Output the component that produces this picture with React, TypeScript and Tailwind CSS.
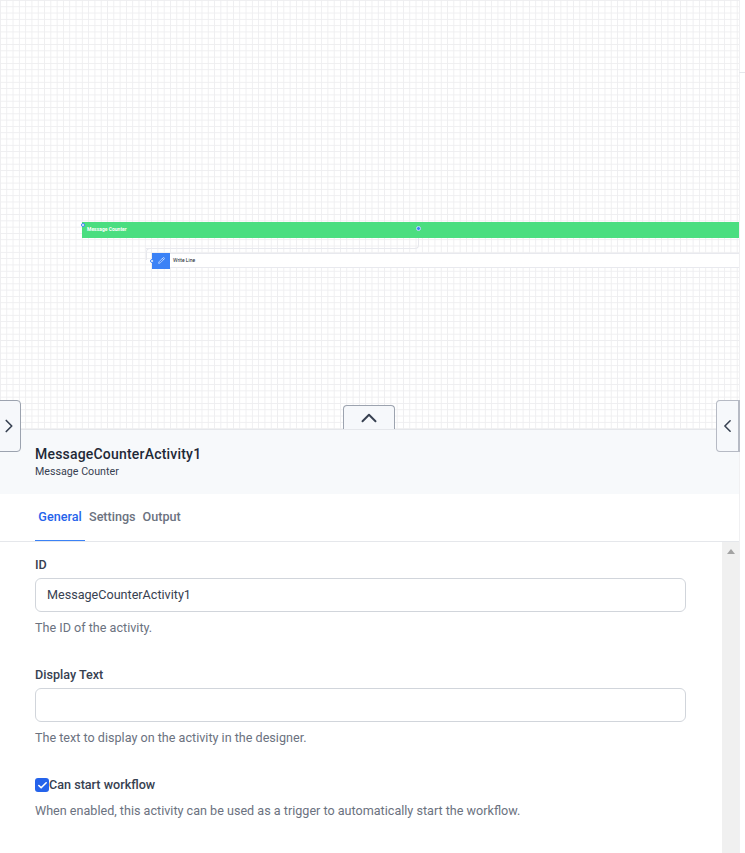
import { ChevronLeft, ChevronRight, ChevronUp, Pencil, Check } from "lucide-react";

function Field({ label, value, help }: { label: string; value: string; help: string }) {
  return (
    <div className="mb-[27px]">
      <div className="text-[12.6px] leading-[20px] font-medium text-[#374151]">{label}</div>
      <div className="mt-[3px] h-[34px] w-[651px] rounded-[6px] border border-[#d1d5db] bg-white px-[11px] text-[12.6px] leading-[32px] text-[#374151]">
        {value}
      </div>
      <p className="mt-[6px] text-[12.6px] leading-[20px] text-[#6b7280]">{help}</p>
    </div>
  );
}

export default function App() {
  return (
    <div className="relative h-[853px] w-[745px] overflow-hidden bg-white font-['Roboto',sans-serif]">
      {/* designer canvas */}
      <div className="relative h-[430px] w-[739px] overflow-hidden border-b border-[#e5e7eb] bg-white bg-[linear-gradient(#eeeef0_1px,transparent_1px),linear-gradient(90deg,#eeeef0_1px,transparent_1px)] bg-[size:6.3px_6.3px]">
        <div className="absolute left-[82px] top-[222px] flex h-[16px] w-[657px] items-center bg-[#4ade80] pl-[5px] text-[5px] font-bold text-white">
          Message Counter
        </div>
        <div className="absolute left-[81px] top-[223px] h-[4px] w-[4px] rounded-full border border-[#3b82f6] bg-white" />
        <div className="absolute left-[416px] top-[226px] h-[5px] w-[5px] rounded-full border border-[#bfdbfe] bg-[#3b82f6]" />

        <div className="absolute left-[146px] top-[238px] h-[11px] w-[273px] rounded-br-[4px] border-b border-r border-[#e8e9ee]" />
        <div className="absolute left-[146px] top-[248px] h-[12px] w-[6px] rounded-tl-[4px] border-l border-t border-[#e8e9ee]" />

        <div className="absolute left-[152px] top-[253px] flex h-[15px] w-[587px] items-center border-y border-[#e8e9ee] bg-white">
          <div className="flex h-[16px] w-[18px] items-center justify-center bg-[#3b82f6]">
            <Pencil size={7} color="#ffffff" strokeWidth={2} />
          </div>
          <span className="ml-[3px] mt-[1px] text-[5px] font-normal text-[#111827]">Write Line</span>
        </div>
        <div className="absolute left-[150px] top-[259px] h-[4px] w-[4px] rounded-full border border-[#3b82f6] bg-white" />
      </div>

      {/* right gutter edge */}
      <div className="absolute left-[739px] top-0 h-[853px] w-[1px] bg-[#f0f0f2]" />
      <div className="absolute left-[739px] top-[72px] h-[1px] w-[6px] bg-[#e5e7eb]" />

      {/* side and collapse toggles */}
      <button className="absolute left-[-5px] top-[400px] flex h-[52px] w-[26px] items-center justify-center rounded-[4px] border border-[#9ca3af] bg-[#f6f8fb] pl-[2px] text-[#374151]">
        <ChevronRight size={26} strokeWidth={1.8} />
      </button>
      <button className="absolute left-[716px] top-[400px] flex h-[52px] w-[24px] items-center justify-center rounded-l-[4px] border-y border-l border-r-2 border-[#b6bac4] bg-[#f6f8fb] text-[#374151]">
        <ChevronLeft size={26} strokeWidth={1.8} />
      </button>
      <button className="absolute left-[343px] top-[405px] flex h-[24px] w-[52px] items-center justify-center rounded-t-[4px] border border-b-0 border-[#9ca3af] bg-[#f6f8fb] text-[#374151]">
        <ChevronUp size={26} strokeWidth={1.8} />
      </button>

      {/* activity panel */}
      <div className="h-[64px] w-[739px] bg-[#f7f9fb] pl-[35px] pt-[14px]">
        <div className="text-[14px] leading-[20px] font-medium tracking-[0.2px] text-[#1f2937]">MessageCounterActivity1</div>
        <div className="mt-[-1px] text-[10.7px] leading-[17px] text-[#374151]">Message Counter</div>
      </div>

      <div className="flex h-[48px] w-[739px] border-b border-[#e5e7eb] pl-[35px] text-[12.6px] font-medium text-[#6b7280]">
        <div className="flex w-[50px] items-center justify-center border-b border-[#3b82f6] text-[#2563eb]">General</div>
        <div className="ml-[4px] flex items-center">Settings</div>
        <div className="ml-[7px] flex items-center">Output</div>
      </div>

      <div className="flex h-[311px] w-[739px]">
        <div className="flex-1 pl-[35px] pt-[13px]">
          <Field label="ID" value="MessageCounterActivity1" help="The ID of the activity." />
          <Field label="Display Text" value="" help="The text to display on the activity in the designer." />
          <div className="flex items-center text-[12.6px] leading-[20px] font-medium text-[#374151]">
            <span className="flex h-[14px] w-[14px] items-center justify-center rounded-[3px] bg-[#2563eb]">
              <Check size={11} color="#ffffff" strokeWidth={3.5} />
            </span>
            Can start workflow
          </div>
          <p className="mt-[6px] text-[12.6px] leading-[20px] text-[#6b7280]">
            When enabled, this activity can be used as a trigger to automatically start the workflow.
          </p>
        </div>
        <div className="flex w-[17px] justify-center bg-[#f0f0f0] pt-[7px]">
          <div className="h-0 w-0 border-x-[4px] border-b-[5px] border-x-transparent border-b-[#a3a3a3]" />
        </div>
      </div>
    </div>
  );
}
